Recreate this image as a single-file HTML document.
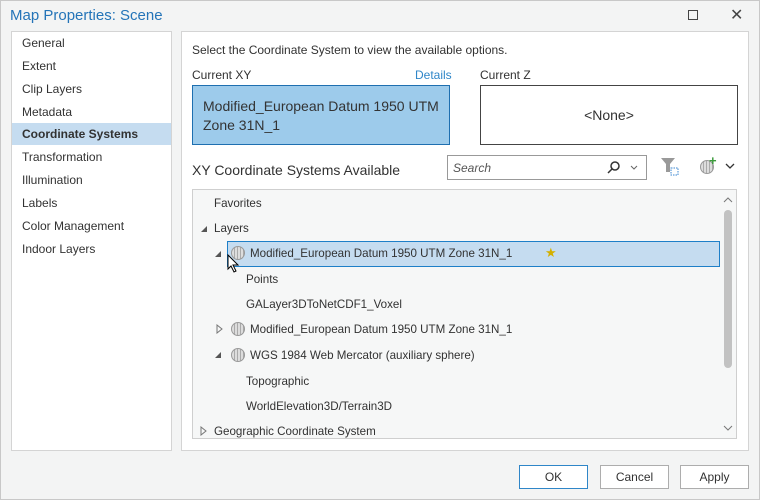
<!DOCTYPE html>
<html><head><style>
*{margin:0;padding:0;box-sizing:border-box}
body{width:760px;height:500px;background:#f3f4f4;font-family:"Liberation Sans",sans-serif;font-size:12px;color:#323232;position:relative;overflow:hidden}
.abs{position:absolute}
.win{left:0;top:0;width:760px;height:500px;border:1px solid #c8c8c8}
.title{left:10px;top:7px;font-size:15px;color:#2474b8}
.nav{left:11px;top:31px;width:161px;height:420px;background:#fff;border:1px solid #d4d4d4}
.nav div{position:absolute;left:0;width:159px;height:22px;padding-left:10px;line-height:22px;font-size:12px}
.panel{left:181px;top:31px;width:568px;height:420px;background:#fff;border:1px solid #d4d4d4}
.tree{left:192px;top:189px;width:545px;height:250px;background:#f6f7f7;border:1px solid #cfcfcf;overflow:hidden}
.row{position:absolute;font-size:11.6px;white-space:nowrap}
.globe{position:absolute;width:14px;height:14px;border-radius:50%;border:1px solid #999;background:repeating-linear-gradient(90deg,#ddd 0 2px,#aaa 2px 3px),#ddd}
.btn{position:absolute;top:465px;width:69px;height:24px;border:1px solid #adadad;background:#fff;text-align:center;line-height:22px;font-size:12px}
</style></head><body>
<div class="abs win"></div>
<div class="abs title">Map Properties: Scene</div>
<div class="abs" style="left:688px;top:10px;width:10px;height:10px;border:1px solid #444"></div>
<div class="abs" style="left:730px;top:5px;font-size:16px;color:#444">✕</div>
<div class="abs nav">
<div style="top:0">General</div><div style="top:23px">Extent</div><div style="top:46px">Clip Layers</div><div style="top:69px">Metadata</div>
<div style="top:91px;background:#c5dcf0;font-weight:bold">Coordinate Systems</div>
<div style="top:114px">Transformation</div><div style="top:137px">Illumination</div><div style="top:160px">Labels</div><div style="top:183px">Color Management</div><div style="top:206px">Indoor Layers</div>
</div>
<div class="abs panel"></div>
<div class="abs" style="left:192px;top:43px">Select the Coordinate System to view the available options.</div>
<div class="abs" style="left:192px;top:68px">Current XY</div>
<div class="abs" style="left:415px;top:68px;color:#2f86c8">Details</div>
<div class="abs" style="left:480px;top:68px">Current Z</div>
<div class="abs" style="left:192px;top:85px;width:258px;height:60px;background:#9dcbeb;border:1px solid #1e6fb0;padding:11px 10px;font-size:14px;line-height:19px;color:#333">Modified_European Datum 1950 UTM Zone 31N_1</div>
<div class="abs" style="left:480px;top:85px;width:258px;height:60px;border:1px solid #444;text-align:center;line-height:58px;font-size:14px">&lt;None&gt;</div>
<div class="abs" style="left:192px;top:162px;font-size:14px">XY Coordinate Systems Available</div>
<div class="abs" style="left:447px;top:155px;width:200px;height:25px;border:1px solid #999;background:#fff"></div>
<div class="abs" style="left:453px;top:161px;font-style:italic;color:#555">Search</div>
<svg class="abs" style="left:605px;top:160px" width="40" height="16"><circle cx="10" cy="6" r="4" fill="none" stroke="#333" stroke-width="1.5"/><line x1="7" y1="9" x2="3" y2="13" stroke="#333" stroke-width="1.5"/><polyline points="26,6 29,9 32,6" fill="none" stroke="#666"/></svg>
<svg class="abs" style="left:660px;top:156px" width="20" height="22"><polygon points="1,2 15,2 10,8 10,16 6,16 6,8" fill="#999"/><rect x="11" y="12" width="7" height="7" fill="none" stroke="#3a86d0" stroke-dasharray="1.5,1"/></svg>
<div class="abs" style="left:700px;top:160px;width:14px;height:14px;border-radius:50%;border:1px solid #999;background:repeating-linear-gradient(90deg,#ddd 0 2px,#aaa 2px 3px)"></div>
<div class="abs" style="left:709px;top:153px;color:#3a9a3a;font-weight:bold;font-size:13px">+</div>
<svg class="abs" style="left:725px;top:162px" width="10" height="8"><polyline points="1,2 5,6 9,2" fill="none" stroke="#333" stroke-width="1.3"/></svg>
<div class="abs tree">
<div class="row" style="left:21px;top:7px">Favorites</div>
<svg class="abs" style="left:7px;top:35px" width="8" height="8"><polygon points="1,7 7,7 7,1" fill="#555"/></svg>
<div class="row" style="left:21px;top:32px">Layers</div>
<div class="abs" style="left:34px;top:51px;width:493px;height:26px;background:#c5dcf0;border:1px solid #1e7fc8"></div>
<svg class="abs" style="left:21px;top:60px" width="8" height="8"><polygon points="1,7 7,7 7,1" fill="#555"/></svg>
<div class="globe" style="left:38px;top:56px"></div>
<div class="row" style="left:57px;top:57px">Modified_European Datum 1950 UTM Zone 31N_1</div>
<div class="row" style="left:352px;top:55px;color:#d4b000;font-size:13px">★</div>
<svg class="abs" style="left:34px;top:64px" width="14" height="20"><polygon points="1,1 1,15 4,12 7,18 9,17 6,11 11,11" fill="#fff" stroke="#000"/></svg>
<div class="row" style="left:53px;top:83px">Points</div>
<div class="row" style="left:53px;top:108px">GALayer3DToNetCDF1_Voxel</div>
<svg class="abs" style="left:23px;top:134px" width="8" height="10"><polygon points="1,1 6,5 1,9" fill="none" stroke="#777"/></svg>
<div class="globe" style="left:38px;top:132px"></div>
<div class="row" style="left:57px;top:133px">Modified_European Datum 1950 UTM Zone 31N_1</div>
<svg class="abs" style="left:21px;top:161px" width="8" height="8"><polygon points="1,7 7,7 7,1" fill="#555"/></svg>
<div class="globe" style="left:38px;top:158px"></div>
<div class="row" style="left:57px;top:159px">WGS 1984 Web Mercator (auxiliary sphere)</div>
<div class="row" style="left:53px;top:185px">Topographic</div>
<div class="row" style="left:53px;top:210px">WorldElevation3D/Terrain3D</div>
<svg class="abs" style="left:7px;top:236px" width="8" height="10"><polygon points="1,1 6,5 1,9" fill="none" stroke="#777"/></svg>
<div class="row" style="left:21px;top:235px">Geographic Coordinate System</div>
<svg class="abs" style="left:530px;top:6px" width="10" height="8"><polyline points="1,6 5,2 9,6" fill="none" stroke="#777"/></svg>
<div class="abs" style="left:531px;top:20px;width:8px;height:158px;background:#c2c2c2;border-radius:4px"></div>
<svg class="abs" style="left:530px;top:234px" width="10" height="8"><polyline points="1,2 5,6 9,2" fill="none" stroke="#777"/></svg>
</div>
<div class="btn" style="left:519px;border:1px solid #2f86c8">OK</div>
<div class="btn" style="left:600px">Cancel</div>
<div class="btn" style="left:680px">Apply</div>
</body></html>
